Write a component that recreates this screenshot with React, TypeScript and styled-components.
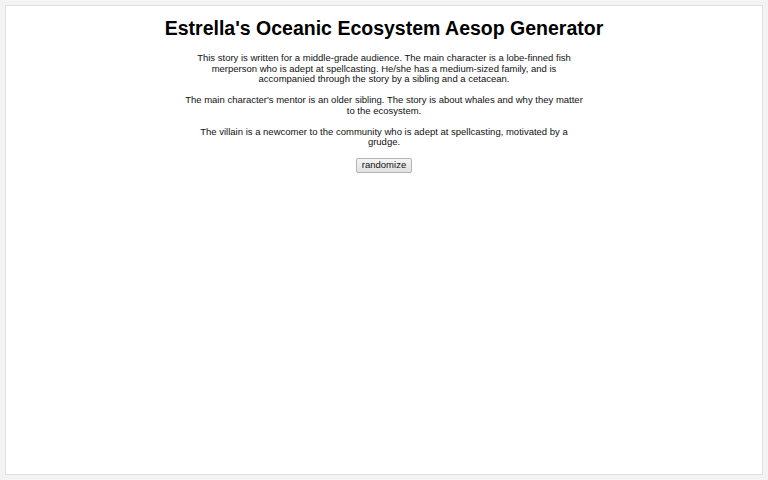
import React from "react";
import styled, { createGlobalStyle } from "styled-components";

const Global = createGlobalStyle`
  html, body {
    margin: 0;
    padding: 0;
    background: #f3f3f3;
  }
  body {
    padding: 5px;
    font-family: "Liberation Sans", Arial, sans-serif;
    color: #111;
  }
`;

const Card = styled.main`
  box-sizing: border-box;
  height: 470px;
  background: #fff;
  border: 1px solid #dedede;
  display: flex;
  flex-direction: column;
  align-items: center;
  padding-top: 10px;
`;

const Title = styled.h1`
  margin: 0 0 13px;
  font-size: 19.5px;
  font-weight: bold;
  line-height: 24px;
  color: #000;
  text-align: center;
`;

const Story = styled.div`
  max-width: 400px;
  display: flex;
  flex-direction: column;
  align-items: center;
  gap: 10px;
`;

const Para = styled.p`
  margin: 0;
  font-size: 9.5px;
  line-height: 10.7px;
  text-align: center;
  color: #111;
`;

const Button = styled.button`
  font-family: "Liberation Sans", Arial, sans-serif;
  font-size: 9.5px;
  line-height: 12px;
  padding: 0 5px;
  height: 15px;
  color: #111;
  background: linear-gradient(#f4f4f4, #e2e2e2);
  border: 1px solid #b4b4b4;
  border-radius: 2px;
`;

export default function App() {
  return (
    <>
      <Global />
      <Card>
        <Title>Estrella's Oceanic Ecosystem Aesop Generator</Title>
        <Story>
          <Para>
            This story is written for a middle-grade audience. The main character is a lobe-finned fish
            merperson who is adept at spellcasting. He/she has a medium-sized family, and is
            accompanied through the story by a sibling and a cetacean.
          </Para>
          <Para>
            The main character's mentor is an older sibling. The story is about whales and why they matter
            to the ecosystem.
          </Para>
          <Para>
            The villain is a newcomer to the community who is adept at spellcasting, motivated by a
            grudge.
          </Para>
          <Button>randomize</Button>
        </Story>
      </Card>
    </>
  );
}
